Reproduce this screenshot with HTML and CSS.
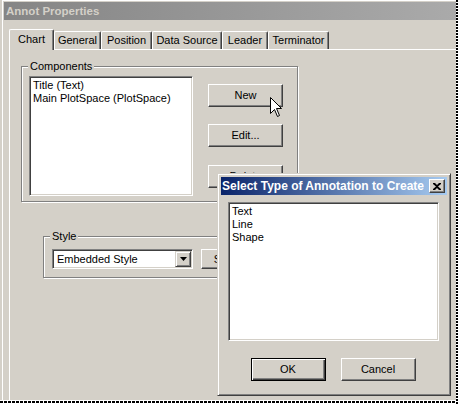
FILE: index.html
```html
<!DOCTYPE html>
<html>
<head>
<meta charset="utf-8">
<link rel="stylesheet" href="styles.css">
</head>
<body>
<div class="screen">
  <div class="window">
    <div class="frame">
      <div class="titlebar">Annot Properties</div>
      <div class="tabs">
        <div class="tab sel w-chart">Chart</div>
        <div class="tab w-general">General</div>
        <div class="tab w-position">Position</div>
        <div class="tab w-data">Data Source</div>
        <div class="tab w-leader">Leader</div>
        <div class="tab w-term">Terminator</div>
      </div>
      <div class="panel">
        <div class="group comp">
          <div class="glabel">Components</div>
          <div class="comp-body">
            <div class="listbox comp-list">
              <div class="item">Title (Text)</div>
              <div class="item">Main PlotSpace (PlotSpace)</div>
            </div>
            <div class="btncol">
              <div class="btn">New</div>
              <div class="btn">Edit...</div>
              <div class="btn del">Delete</div>
            </div>
          </div>
        </div>
        <div class="group style">
          <div class="glabel">Style</div>
          <div class="style-body">
            <div class="combo">
              <div class="combo-text">Embedded Style</div>
              <div class="combo-btn">
                <svg width="7" height="4" viewBox="0 0 7 4"><path d="M0 0H7L3.5 4Z" fill="#000"/></svg>
              </div>
            </div>
            <div class="btn short">Save As...</div>
          </div>
        </div>
      </div>
    </div>
  </div>
  <div class="torn-right"></div>
  <div class="torn-bottom"></div>

  <div class="dialog">
    <div class="dtitle">
      <span class="dtitle-text">Select Type of Annotation to Create</span>
      <div class="close">
        <svg width="8" height="7" viewBox="0 0 8 7"><path d="M0 0h2l2 2 2-2h2v1L5 3.5 8 6v1H6L4 5 2 7H0V6l3-2.5L0 1Z" fill="#000"/></svg>
      </div>
    </div>
    <div class="dbody">
      <div class="listbox dlist">
        <div class="item">Text</div>
        <div class="item">Line</div>
        <div class="item">Shape</div>
      </div>
      <div class="drow">
        <div class="btn default">OK</div>
        <div class="btn">Cancel</div>
      </div>
    </div>
  </div>

  <svg class="cursor" width="13" height="21" viewBox="0 0 13 21">
    <path d="M0.5 0.5V16.5L4.5 12.5L7.5 19.5L9.5 18.5L6.5 11.5H11.5Z" fill="#fff" stroke="#000" stroke-width="1" stroke-linejoin="miter"/>
  </svg>
</div>
</body>
</html>
```

FILE: styles.css
```css
* { box-sizing: border-box; }
html, body { margin: 0; padding: 0; background: #fff; }
body {
  font-family: "Liberation Sans", Arial, sans-serif;
  font-size: 11px;
  line-height: 13px;
  color: #000;
}
.screen {
  position: relative;
  width: 460px;
  height: 404px;
  display: grid;
  grid-template-columns: 456px 4px;
  grid-template-rows: 400px 4px;
  background: #fff;
  overflow: hidden;
}
.window {
  grid-column: 1;
  grid-row: 1;
  background: #d4d0c8;
  padding-left: 2px;
  overflow: hidden;
}
.frame {
  border-left: 1px solid #fff;
  border-top: 1px solid #fff;
  padding: 1px 0 0 1px;
  height: 100%;
  width: 600px;
}
.titlebar {
  height: 18px;
  background: linear-gradient(to right, #858585 0, #aaaaaa 452px, #b8b8b8 600px);
  color: #d4d0c8;
  font-weight: bold;
  font-size: 11.5px;
  padding-left: 2px;
  line-height: 18px;
}
.tabs {
  display: flex;
  align-items: flex-end;
  margin: 9px 0 0 5px;
  height: 20px;
  position: relative;
  z-index: 1;
}
.tab {
  height: 18px;
  border-top: 1px solid #fff;
  border-left: 1px solid #fff;
  border-right: 1px solid #404040;
  box-shadow: inset -1px 0 #808080;
  border-top-left-radius: 2px;
  border-top-right-radius: 2px;
  text-align: center;
  line-height: 17px;
  background: #d4d0c8;
}
.tab.sel {
  height: 21px;
  margin-bottom: -1px;
  line-height: 18px;
}
.w-chart { width: 45px; }
.w-general { width: 47px; }
.w-position { width: 51px; }
.w-data { width: 70px; }
.w-leader { width: 46px; }
.w-term { width: 61px; }

.panel {
  margin-left: 5px;
  border-top: 1px solid #fff;
  border-left: 1px solid #fff;
  height: 400px;
  padding-top: 16px;
  padding-left: 11px;
}
.group {
  border: 1px solid #808080;
  box-shadow: inset 1px 1px #fff, 1px 1px #fff;
}
.glabel {
  margin: -7px 0 0 6px;
  padding: 0 2px;
  background: #d4d0c8;
  width: max-content;
  line-height: 13px;
  height: 13px;
}
.comp {
  width: 277px;
  height: 136px;
}
.comp-body {
  display: flex;
  padding: 3px 0 0 7px;
}
.listbox {
  background: #fff;
  border: 1px solid;
  border-color: #808080 #fff #fff #808080;
  box-shadow: inset 1px 1px #404040, inset -1px -1px #d4d0c8;
  padding: 2px 3px;
}
.comp-list {
  width: 164px;
  height: 120px;
}
.btncol {
  display: flex;
  flex-direction: column;
  gap: 17px;
  margin: 8px 0 0 15px;
}
.btn {
  width: 75px;
  height: 23px;
  border: 1px solid;
  border-color: #fff #404040 #404040 #fff;
  box-shadow: inset -1px -1px #808080;
  background: #d4d0c8;
  display: flex;
  align-items: center;
  justify-content: center;
}
.btn.del { margin-top: 1px; }
.btn.default {
  border: 1px solid #000;
  box-shadow: inset 1px 1px #fff, inset -1px -1px #404040, inset -2px -2px #808080;
}
.style {
  margin: 34px 0 0 22px;
  width: 300px;
  height: 42px;
}
.style-body {
  display: flex;
  padding: 6px 0 0 8px;
}
.combo {
  width: 141px;
  height: 20px;
  background: #fff;
  border: 1px solid;
  border-color: #808080 #fff #fff #808080;
  box-shadow: inset 1px 1px #404040, inset -1px -1px #d4d0c8;
  display: flex;
  padding: 1px;
}
.combo-text {
  flex: 1;
  padding-left: 3px;
  line-height: 16px;
}
.combo-btn {
  width: 16px;
  height: 16px;
  background: #d4d0c8;
  border: 1px solid;
  border-color: #d4d0c8 #404040 #404040 #d4d0c8;
  box-shadow: inset 1px 1px #fff, inset -1px -1px #808080;
  display: flex;
  align-items: center;
  justify-content: center;
}
.btn.short {
  height: 20px;
  margin-left: 8px;
}

.torn-right {
  grid-column: 2;
  grid-row: 1 / 3;
  background: #fff repeating-linear-gradient(to bottom, #000 0 2px, transparent 2px 3px) 0 0 / 2px 100% no-repeat;
}
.torn-bottom {
  grid-column: 1;
  grid-row: 2;
  background: #fff repeating-linear-gradient(to right, #000 0 3px, transparent 3px 4px) 0 1px / 100% 2px no-repeat;
}

.dialog {
  position: absolute;
  left: 217px;
  top: 173px;
  width: 234px;
  height: 223px;
  background: #d4d0c8;
  border: 1px solid;
  border-color: #d4d0c8 #404040 #404040 #d4d0c8;
  box-shadow: inset 1px 1px #fff, inset -1px -1px #808080;
  padding: 3px;
  display: flex;
  flex-direction: column;
}
.dtitle {
  height: 18px;
  background: linear-gradient(to right, #0a246a, #a6caf0);
  color: #fff;
  font-weight: bold;
  font-size: 12px;
  display: flex;
  align-items: center;
  justify-content: space-between;
  padding: 0 2px 0 1px;
}
.close {
  width: 16px;
  height: 14px;
  background: #d4d0c8;
  border: 1px solid;
  border-color: #fff #404040 #404040 #fff;
  box-shadow: inset -1px -1px #808080;
  display: flex;
  align-items: center;
  justify-content: center;
  padding-right: 1px;
}
.dbody {
  padding: 7px 8px 0 7px;
}
.dlist {
  width: 211px;
  height: 139px;
}
.drow {
  display: flex;
  justify-content: center;
  gap: 15px;
  margin-top: 17px;
  padding-right: 1px;
}
.cursor {
  position: absolute;
  left: 270px;
  top: 97px;
}
```
